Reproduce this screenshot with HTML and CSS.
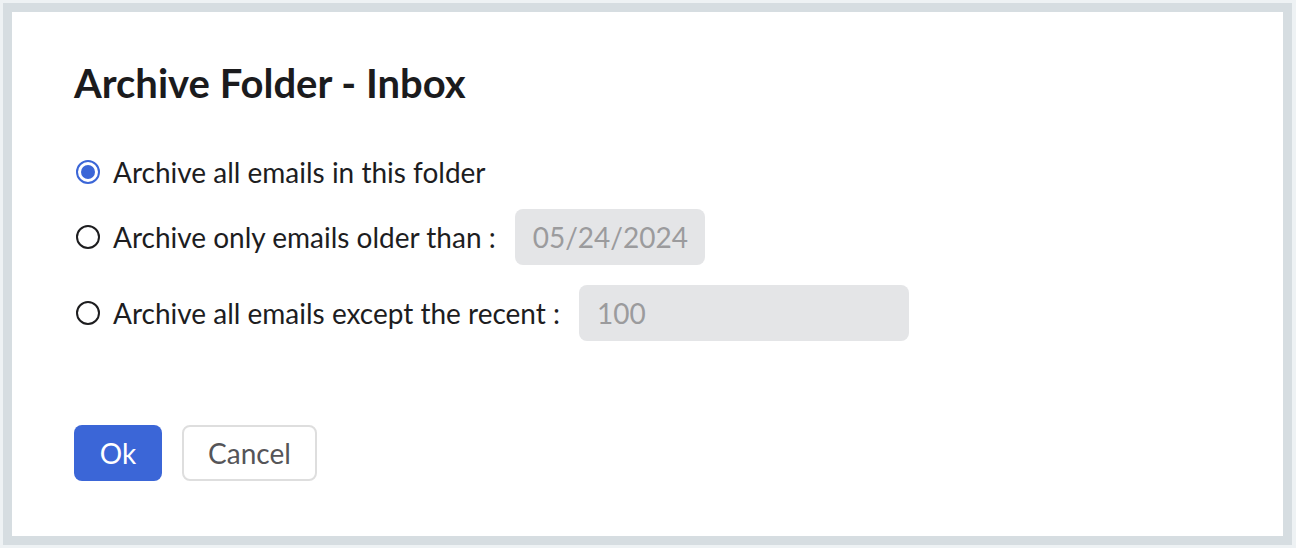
FILE: index.html
```html
<!DOCTYPE html>
<html lang="en">
<head>
<meta charset="utf-8">
<title>Archive Folder - Inbox</title>
<link rel="stylesheet" href="styles.css">
</head>
<body>
<div class="frame">
  <div class="dialog">
    <h1 class="title">Archive Folder - Inbox</h1>
    <div class="options">
      <label class="option option-first">
        <span class="radio radio-checked"></span>
        <span class="label">Archive all emails in this folder</span>
      </label>
      <label class="option">
        <span class="radio"></span>
        <span class="label">Archive only emails older than :</span>
        <span class="field field-date">05/24/2024</span>
      </label>
      <label class="option">
        <span class="radio"></span>
        <span class="label">Archive all emails except the recent :</span>
        <span class="field field-count">100</span>
      </label>
    </div>
    <div class="actions">
      <button class="btn btn-primary">Ok</button>
      <button class="btn btn-secondary">Cancel</button>
    </div>
  </div>
</div>
</body>
</html>
```

FILE: styles.css
```css
html, body {
  margin: 0;
  padding: 0;
}
body {
  background: #eef2f4;
  font-family: Lato, "Open Sans", "Liberation Sans", sans-serif;
  color: #1d1d1f;
  width: 1296px;
  height: 548px;
  overflow: hidden;
}
.frame {
  margin: 3px 4px 0 3px;
  border: 9px solid #d6dde1;
  background: #ffffff;
  height: 524px;
}
.dialog {
  padding: 47px 0 0 62px;
  box-sizing: border-box;
  height: 100%;
}
.title {
  margin: 0;
  font-size: 40px;
  font-weight: 700;
  line-height: 48px;
  color: #1b1b1d;
}
.options {
  display: flex;
  flex-direction: column;
  margin-top: 47px;
  gap: 20px;
}
.option {
  display: flex;
  align-items: center;
  height: 56px;
  font-size: 28px;
}
.option-first {
  height: 35px;
}
.radio {
  width: 20px;
  height: 20px;
  border: 2px solid #1d1d1f;
  border-radius: 50%;
  box-sizing: content-box;
  margin-left: 2px;
  margin-right: 13px;
  flex: none;
  position: relative;
}
.radio-checked {
  border-color: #3b66d7;
}
.radio-checked::after {
  content: "";
  position: absolute;
  left: 3px;
  top: 3px;
  width: 14px;
  height: 14px;
  border-radius: 50%;
  background: #3b66d7;
}
.label {
  white-space: nowrap;
}
.field {
  display: flex;
  align-items: center;
  height: 56px;
  box-sizing: border-box;
  padding-left: 18px;
  margin-left: 19px;
  background: #e4e5e7;
  border-radius: 8px;
  color: #9b9b9d;
  font-size: 28px;
}
.field-date {
  width: 190px;
}
.field-count {
  width: 330px;
}
.actions {
  display: flex;
  gap: 20px;
  margin-top: 84px;
}
.btn {
  height: 56px;
  border-radius: 8px;
  font-family: inherit;
  font-size: 28px;
  padding: 0;
  cursor: pointer;
}
.btn-primary {
  width: 88px;
  background: #3b66d7;
  color: #ffffff;
  border: none;
}
.btn-secondary {
  width: 135px;
  background: #ffffff;
  color: #555558;
  border: 2px solid #dedede;
}
```
